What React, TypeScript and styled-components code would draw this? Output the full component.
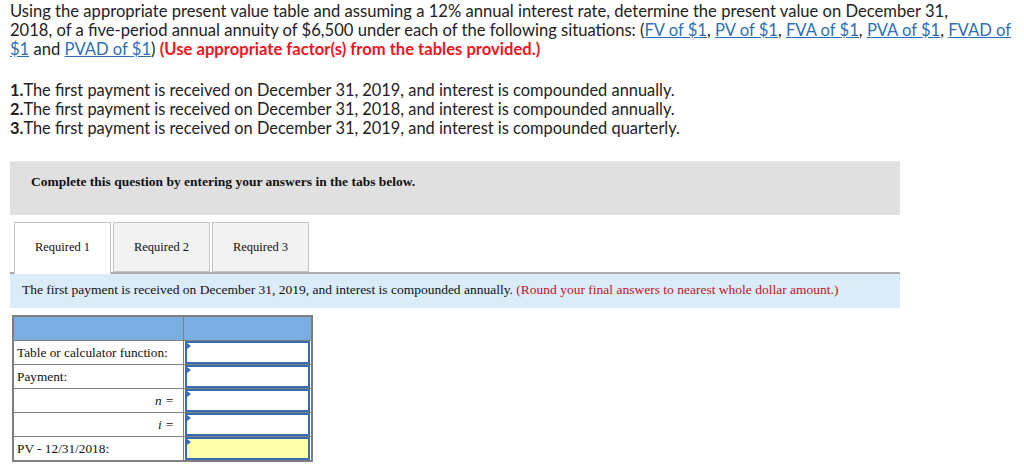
import React, { useState } from "react"
import styled, { createGlobalStyle } from "styled-components"

const GlobalStyle = createGlobalStyle`
  html, body {
    margin: 0;
    padding: 0;
    background: #fff;
  }
  body {
    font-family: "Lato", "Open Sans", sans-serif;
  }
`

const Page = styled.div`
  padding: 2px 10px 0 10px;
  width: 890px;
`

const Question = styled.p`
  margin: 0;
  font-family: "Lato", sans-serif;
  font-size: 16.6px;
  line-height: 19px;
  color: #222;
  white-space: nowrap;
  a {
    color: #2d6fb7;
    text-decoration: underline;
  }
  .hint {
    color: #f0141e;
    font-weight: 700;
  }
`

const List = styled.div`
  margin-top: 21px;
  font-family: "Lato", sans-serif;
  font-size: 16.4px;
  line-height: 19px;
  color: #222;
  b {
    font-weight: 700;
  }
`

const Notice = styled.div`
  margin-top: 24px;
  height: 54px;
  background: #e0e0e0;
  border-top: 1px solid #e8e8e8;
  box-sizing: border-box;
  padding: 12px 0 0 21px;
  font-family: "Liberation Serif", serif;
  font-size: 13.5px;
  font-weight: 700;
  color: #111;
`

const TabBar = styled.div`
  display: flex;
  gap: 2px;
  margin-top: 7px;
  padding-left: 4px;
  border-bottom: 2px solid #aaa;
`

const Tab = styled.button<{ $active: boolean }>`
  width: 97px;
  box-sizing: border-box;
  margin-bottom: ${(p) => (p.$active ? "-2px" : "0")};
  height: ${(p) => (p.$active ? "52px" : "50px")};
  border: 1px solid #c4c4c4;
  border-bottom: ${(p) => (p.$active ? "none" : "1px solid #c4c4c4")};
  background: ${(p) => (p.$active ? "#fff" : "#f2f2f2")};
  font-family: "Liberation Serif", serif;
  font-size: 12.5px;
  color: #111;
  padding: 0 0 ${(p) => (p.$active ? "2px" : "0")} 0;
  cursor: pointer;
`

const Strip = styled.div`
  height: 34px;
  background: #daecf9;
  padding: 8px 0 0 12px;
  box-sizing: border-box;
  font-family: "Liberation Serif", serif;
  font-size: 13.5px;
  color: #111;
  .red {
    color: #c0121c;
  }
`

const Grid = styled.table`
  margin: 7px 0 0 2px;
  border-collapse: collapse;
  border: 2px solid #7f7f7f;
`

const HeadCell = styled.td`
  background: #7aaee3;
  height: 23px;
  padding: 0;
  border: 1px solid #7f7f7f;
`

const LabelCell = styled.td<{ $right?: boolean }>`
  width: 157px;
  height: 23px;
  padding: 0 9px 0 3px;
  border: 1px solid #7f7f7f;
  font-family: "Liberation Serif", serif;
  font-size: 13.3px;
  color: #111;
  text-align: ${(p) => (p.$right ? "right" : "left")};
  font-style: ${(p) => (p.$right ? "italic" : "normal")};
`

const InputCell = styled.td`
  width: 125px;
  padding: 0 1px;
  border: 1px solid #7f7f7f;
`

const Field = styled.div<{ $yellow?: boolean }>`
  position: relative;
  height: 19px;
  border: 2px solid #3a6db0;
  background: ${(p) => (p.$yellow ? "#ffffa8" : "#fff")};
  &::before {
    content: "";
    position: absolute;
    left: 0;
    top: 0;
    border-left: 4px solid #3a6db0;
    border-top: 3px solid transparent;
    border-bottom: 3px solid transparent;
  }
`

const rows = [
  { label: "Table or calculator function:" },
  { label: "Payment:" },
  { label: "n =", right: true },
  { label: "i =", right: true },
  { label: "PV - 12/31/2018:", yellow: true },
]

const App = (): React.ReactElement => {
  const [tab, setTab] = useState(0)
  return (
    <>
      <GlobalStyle />
      <Page>
        <Question>
          Using the appropriate present value table and assuming a 12% annual interest rate, determine the present value on December 31,
          <br />
          2018, of a five-period annual annuity of $6,500 under each of the following situations: (<a>FV of $1</a>, <a>PV of $1</a>,{" "}
          <a>FVA of $1</a>, <a>PVA of $1</a>, <a>FVAD of</a>
          <br />
          <a>$1</a> and <a>PVAD of $1</a>){" "}
          <span className="hint">(Use appropriate factor(s) from the tables provided.)</span>
        </Question>
        <List>
          <div><b>1.</b>The first payment is received on December 31, 2019, and interest is compounded annually.</div>
          <div><b>2.</b>The first payment is received on December 31, 2018, and interest is compounded annually.</div>
          <div><b>3.</b>The first payment is received on December 31, 2019, and interest is compounded quarterly.</div>
        </List>
        <Notice>Complete this question by entering your answers in the tabs below.</Notice>
        <TabBar>
          {["Required 1", "Required 2", "Required 3"].map((t, i) => (
            <Tab key={t} $active={tab === i} onClick={() => setTab(i)}>
              {t}
            </Tab>
          ))}
        </TabBar>
        <Strip>
          The first payment is received on December 31, 2019, and interest is compounded annually.{" "}
          <span className="red">(Round your final answers to nearest whole dollar amount.)</span>
        </Strip>
        <Grid>
          <tbody>
            <tr>
              <HeadCell />
              <HeadCell />
            </tr>
            {rows.map((r) => (
              <tr key={r.label}>
                <LabelCell $right={r.right}>{r.label}</LabelCell>
                <InputCell>
                  <Field $yellow={r.yellow} />
                </InputCell>
              </tr>
            ))}
          </tbody>
        </Grid>
      </Page>
    </>
  )
}

export default App
